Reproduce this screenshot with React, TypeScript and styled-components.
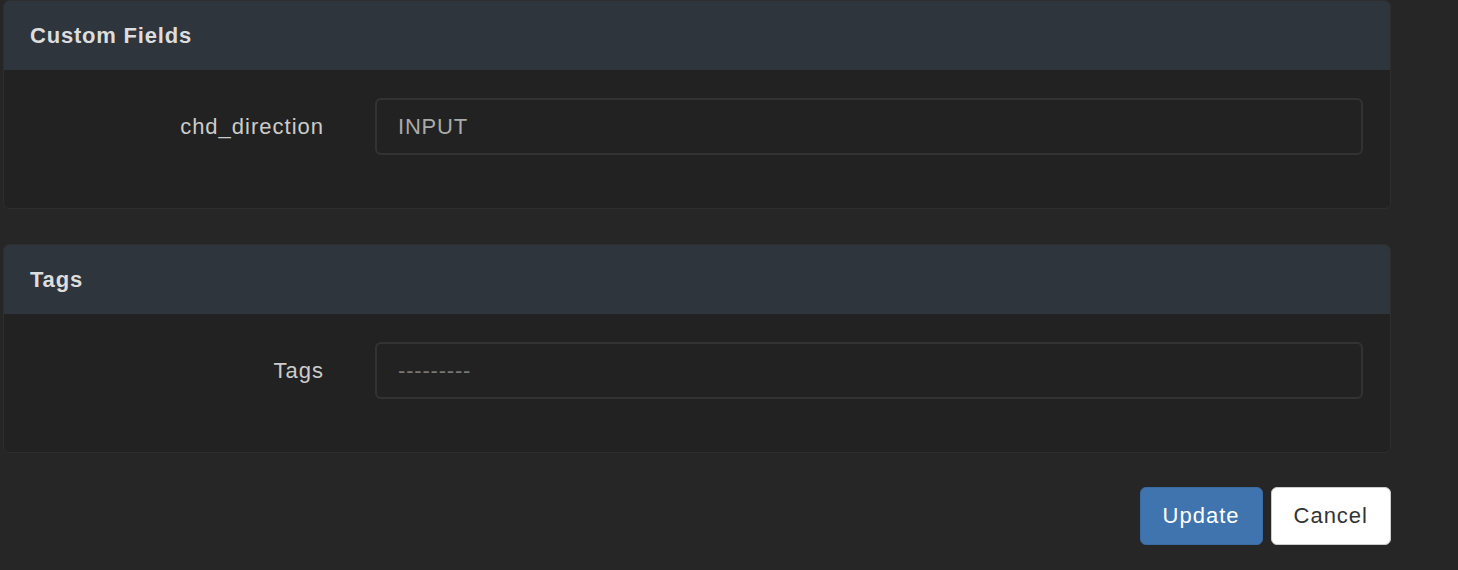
import styled, { createGlobalStyle } from 'styled-components';

const GlobalStyle = createGlobalStyle`
  html, body {
    margin: 0;
    padding: 0;
    background: #262626;
    font-family: "Liberation Sans", Arial, sans-serif;
  }
`;

type FieldType = {
  label: string;
  value?: string;
  placeholder?: string;
};

type PanelType = {
  title: string;
  fields: FieldType[];
};

const panels: PanelType[] = [
  { title: 'Custom Fields', fields: [{ label: 'chd_direction', value: 'INPUT' }] },
  { title: 'Tags', fields: [{ label: 'Tags', placeholder: '---------' }] },
];

export default function App() {
  return (
    <>
      <GlobalStyle />
      <Page>
        {panels.map((panel) => (
          <Panel key={panel.title}>
            <PanelHeading>{panel.title}</PanelHeading>
            <PanelBody>
              {panel.fields.map((field) => (
                <FormRow key={field.label}>
                  <Label>{field.label}</Label>
                  <Input defaultValue={field.value} placeholder={field.placeholder} />
                </FormRow>
              ))}
            </PanelBody>
          </Panel>
        ))}
        <Actions>
          <Button $primary>Update</Button>
          <Button>Cancel</Button>
        </Actions>
      </Page>
    </>
  );
}

const Page = styled.div`
  display: flex;
  flex-direction: column;
  gap: 35px;
  width: 1388px;
  padding: 0 0 0 3px;
`;

const Panel = styled.section`
  background: #222222;
  border: 1px solid #2e2e2e;
  border-radius: 6px;
  overflow: hidden;
`;

const PanelHeading = styled.div`
  display: flex;
  align-items: center;
  height: 69px;
  padding: 0 26px;
  background: #2e353d;
  color: #dddddd;
  font-size: 22px;
  font-weight: bold;
  letter-spacing: 0.8px;
`;

const PanelBody = styled.div`
  padding: 28px 27px 53px 0;
`;

const FormRow = styled.div`
  display: flex;
  align-items: center;
  gap: 51px;
`;

const Label = styled.label`
  width: 320px;
  text-align: right;
  color: #cccccc;
  font-size: 22px;
  letter-spacing: 1px;
`;

const Input = styled.input`
  flex: 1;
  box-sizing: border-box;
  height: 57px;
  padding: 0 21px;
  background: #222222;
  border: 2px solid #333333;
  border-radius: 6px;
  color: #aaaaaa;
  font-family: inherit;
  font-size: 22px;
  letter-spacing: 0.8px;
  outline: none;

  &::placeholder {
    color: #777777;
  }
`;

const Actions = styled.div`
  display: flex;
  justify-content: flex-end;
  gap: 8px;
  margin-top: -1px;
`;

const Button = styled.button<{ $primary?: boolean }>`
  box-sizing: border-box;
  height: 58px;
  padding: 0 22px;
  border-radius: 6px;
  border: 1px solid ${(props) => (props.$primary ? '#3a6ba3' : '#cccccc')};
  background: ${(props) => (props.$primary ? '#4074ae' : '#ffffff')};
  color: ${(props) => (props.$primary ? '#ffffff' : '#333333')};
  font-family: inherit;
  font-size: 22px;
  letter-spacing: 1px;
  cursor: pointer;
`;
